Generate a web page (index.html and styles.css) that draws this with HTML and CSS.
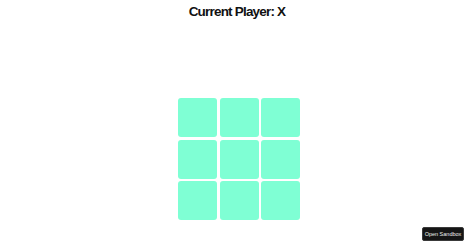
FILE: index.html
```html
<!DOCTYPE html>
<html lang="en">
<head>
<meta charset="utf-8">
<title>Tic Tac Toe</title>
<link rel="stylesheet" href="styles.css">
</head>
<body>
<div class="app">
  <h1 class="status">Current Player: X</h1>
  <div class="board">
    <div class="cell"></div><div class="cell"></div><div class="cell"></div>
    <div class="cell"></div><div class="cell"></div><div class="cell"></div>
    <div class="cell"></div><div class="cell"></div><div class="cell"></div>
  </div>
</div>
<a class="sandbox-btn">Open Sandbox</a>
</body>
</html>
```
FILE: styles.css
```css
html, body {
  margin: 0;
  padding: 0;
  background: #ffffff;
}
body {
  font-family: "Liberation Sans", Arial, sans-serif;
  width: 474px;
  height: 248px;
  overflow: hidden;
}
.app {
  display: flex;
  flex-direction: column;
  align-items: center;
}
.status {
  margin: 4px 0 0 0;
  font-size: 13.5px;
  letter-spacing: -0.8px;
  line-height: 15px;
  font-weight: bold;
  color: #111;
}
.board {
  margin-top: 79px;
  margin-left: 4px;
  display: grid;
  grid-template-columns: repeat(3, 39px);
  grid-template-rows: repeat(3, 39px);
  gap: 2.5px;
}
.cell {
  background: #7fffd4;
  border-radius: 3px;
}
.sandbox-btn {
  position: fixed;
  right: 10px;
  bottom: 7px;
  width: 42px;
  height: 14px;
  box-sizing: border-box;
  background: #151515;
  border: 1px solid #3a3a3a;
  border-radius: 2px;
  color: #f0f0f0;
  font-size: 5.5px;
  line-height: 12px;
  text-align: center;
  white-space: nowrap;
}
```
